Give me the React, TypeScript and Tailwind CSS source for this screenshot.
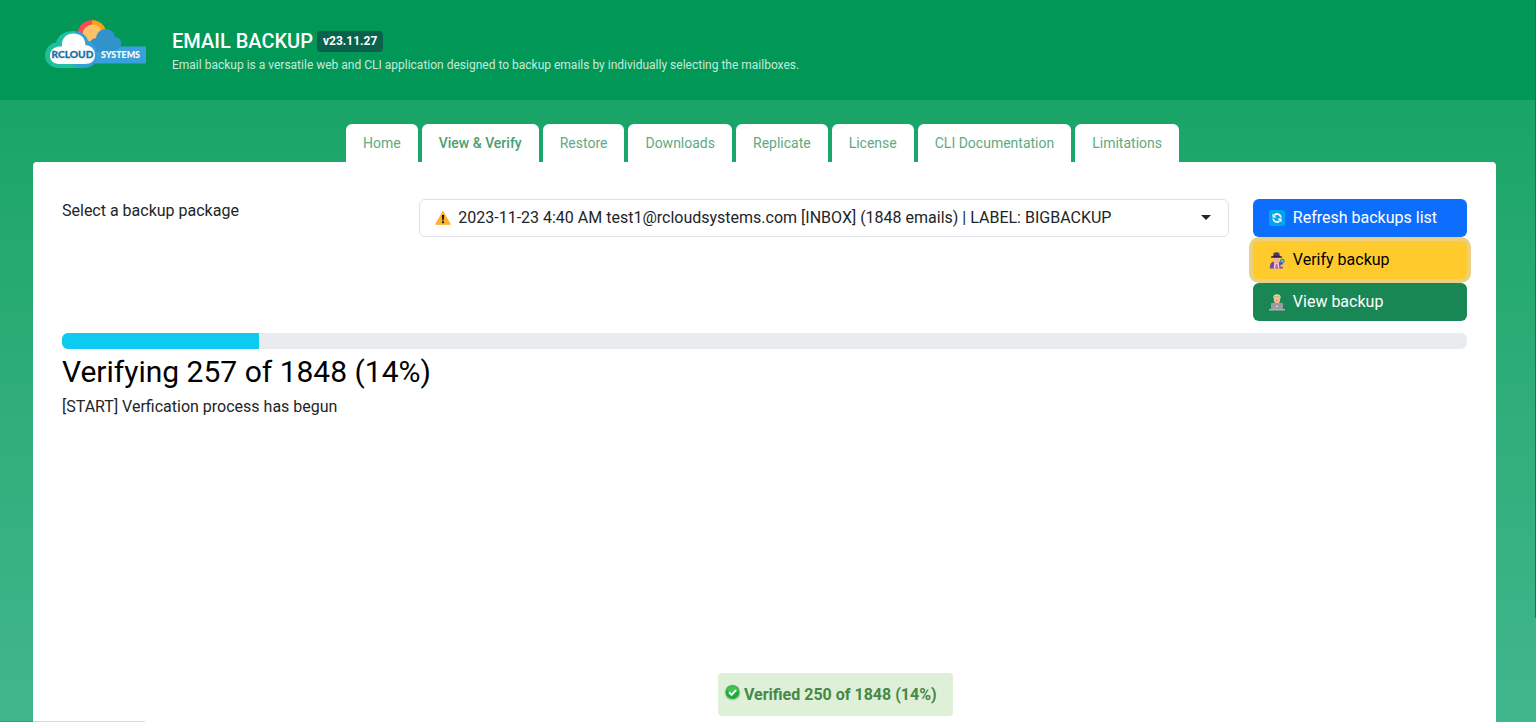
import { useState } from "react";

const tabs = [
  "Home",
  "View & Verify",
  "Restore",
  "Downloads",
  "Replicate",
  "License",
  "CLI Documentation",
  "Limitations",
];

const packages = [
  "2023-11-23 4:40 AM test1@rcloudsystems.com [INBOX] (1848 emails) | LABEL: BIGBACKUP",
];

const Logo = () => (
  <svg
    width="102"
    height="50"
    viewBox="0 0 102 50"
    role="img"
    aria-label="RCloud Systems"
  >
    <defs>
      <linearGradient id="cloudEdge" x1="0" x2="1" y1="0" y2="0">
        <stop offset="0" stopColor="#1fbf9c" />
        <stop offset="0.54" stopColor="#22bfa8" />
        <stop offset="0.62" stopColor="#30a3d4" />
        <stop offset="1" stopColor="#3a9bdb" />
      </linearGradient>
    </defs>
    <path d="M33 18a14.5 14.5 0 0 1 14-18v18z" fill="#f84b55" />
    <path d="M47 0a15 15 0 0 1 14.5 18H47z" fill="#f9a01b" />
    <circle cx="47.500" cy="14.500" r="10" fill="#fdc168" />
    <path d="M44 26.500h57v17H44z" fill="#3aa0dc" />
    <path
      d="M47 30c-4-2-4-11 4-12 1-6 5-9 10-9s8 3 9 8c7 0 8 9 3 12-4 3-22 4-26 1z"
      fill="#3292cb"
    />
    <path
      d="M15 48C5 48 0 42 0 36c0-7 5-13 11-13.500C13 15 20 11 28 11c7 0 13 3 15 9.500 6 2 9 8 9 14.500 0 8-5 13-13 13z"
      fill="url(#cloudEdge)"
    />
    <path
      d="M14 44C8 44 5 40 5 35.500c0-5 4-8.500 9-9h3C16 18 22 13.500 28.500 13.500S40 17 40.500 25C47 26 50 30 50 35c0 6-4 9-10 9z"
      fill="#fff"
    />
    <text
      x="6.500"
      y="38"
      fontFamily="Lato, sans-serif"
      fontSize="10.200"
      fontWeight="900"
      fill="#1673a5"
      stroke="#1673a5"
      strokeWidth=".3"
    >
      RCLOUD
    </text>
    <text
      x="56"
      y="38"
      fontFamily="Lato, sans-serif"
      fontSize="8.900"
      fontWeight="900"
      fill="#fff"
    >
      SYSTEMS
    </text>
  </svg>
);

const WarningIcon = () => (
  <svg width="16" height="16" viewBox="0 0 16 16" aria-hidden="true">
    <path
      d="M8 1.500 15.300 14.300H.7z"
      fill="#ffb02e"
      stroke="#ffb02e"
      strokeLinejoin="round"
    />
    <path d="M7 5h2l-.4 5.500H7.400z" fill="#000" />
    <circle cx="8" cy="12.300" r="1" fill="#000" />
  </svg>
);

const RefreshIcon = () => (
  <svg width="16" height="16" viewBox="0 0 16 16" aria-hidden="true">
    <rect width="16" height="16" rx="2" fill="#00a6ed" />
    <path
      d="M11.800 7.500A3.700 3.700 0 0 0 5.600 5M4.200 8.500A3.700 3.700 0 0 0 10.400 11"
      fill="none"
      stroke="#fff"
      strokeWidth="1.800"
    />
    <path d="M3.500 3.500v4h4zM12.500 12.500v-4h-4z" fill="#fff" />
  </svg>
);

const DetectiveIcon = () => (
  <svg width="16" height="17" viewBox="0 0 16 17" aria-hidden="true">
    <path
      d="M.8 16.500c0-4 1-6.500 3.700-7L7.500 13l3-3.500c2.500.5 3.500 3 3.500 7z"
      fill="#6b4fa0"
    />
    <path d="M4.500 5h6v3.500a3 3 0 0 1-6 0z" fill="#f0b391" />
    <path d="m5.300 10.500 2.200 1.500 2.200-1.500.8 6H4.700z" fill="#e3d3ee" />
    <path d="M6.800 12h1.600l.8 4.500H6.200z" fill="#f0508a" />
    <path d="M4 4.500 4.800.8Q7.500-.4 10.200.8L11 4.500z" fill="#433b6b" />
    <path d="M2 4.500q5.500-1.500 11 0v1.300H2z" fill="#321b41" />
    <path d="m13 10.500-.8 4" stroke="#321b41" strokeWidth="1.200" />
    <circle
      cx="13.300"
      cy="9"
      r="2"
      fill="#26c9fc"
      stroke="#46606e"
      strokeWidth=".7"
    />
    <circle cx="12.800" cy="13.800" r="1.500" fill="#f3ad8b" />
  </svg>
);

const TechnologistIcon = () => (
  <svg width="16" height="17" viewBox="0 0 16 17" aria-hidden="true">
    <path d="M2.500 12c0-2.500 2.500-4 5.500-4s5.500 1.500 5.500 4z" fill="#7e8a90" />
    <path d="M6.500 7h3v2.500L8 10.500 6.500 9.500z" fill="#e8a27c" />
    <path d="M4.800 3h6.400v2.500a3.200 3.500 0 0 1-6.400 0z" fill="#f2b898" />
    <path
      d="M4.300 4.500C3.800 1.800 5.500.3 8 .3s4.200 1.500 3.700 4.200L10.600 2.800H5.400z"
      fill="#e9d58c"
    />
    <path d="M6.800 6.300h2.400L8 7.100z" fill="#c4605c" />
    <rect x="2" y="9" width="12" height="6.500" rx=".8" fill="#9b9b9b" />
    <path d="M0 15h16v1.500H0z" fill="#b4acb8" />
    <circle cx="8" cy="12.300" r=".9" fill="#e6e6e6" />
  </svg>
);

const CheckIcon = () => (
  <svg
    className="mb-1 shrink-0"
    width="17"
    height="17"
    viewBox="0 0 18 18"
    aria-hidden="true"
  >
    <circle cx="9" cy="9" r="8.500" fill="#b4cdb0" />
    <circle cx="9" cy="8.500" r="7.300" fill="#1bac33" />
    <path d="M3 7.500a6 5.500 0 0 1 12 0q-6 3-12 0z" fill="#3fc652" />
    <path
      d="m5.300 8.800 2.700 2.700 4.800-5"
      fill="none"
      stroke="#fff"
      strokeWidth="2.200"
    />
  </svg>
);

const Header = () => (
  <header className="flex h-[100px] shrink-0 items-start gap-[25px] bg-[#009757] pl-[45px] pt-5">
    <Logo />
    <div className="pt-2">
      <div className="flex items-center gap-1">
        <h1 className="text-[20px] leading-[26px] font-medium text-white">
          EMAIL BACKUP
        </h1>
        <span className="rounded bg-[#08614a] px-[6px] text-[12px] leading-[21px] font-bold text-white">
          v23.11.27
        </span>
      </div>
      <p className="text-[12px] leading-[22px] text-[#c9eadb]">
        Email backup is a versatile web and CLI application designed to backup
        emails by individually selecting the mailboxes.
      </p>
    </div>
  </header>
);

export default function App() {
  const [activeTab, setActiveTab] = useState("View & Verify");
  const [selected, setSelected] = useState(packages[0]);
  const verified = 257;
  const total = 1848;
  const percent = Math.round((verified / total) * 100);

  return (
    <div className="relative flex min-h-screen flex-col bg-linear-to-b from-[#0da260] to-[#40b68d] font-['Roboto',sans-serif] text-[16px] leading-6 text-[#212529]">
      <Header />

      <nav className="mt-6 flex items-end justify-center gap-1 pr-[11px]">
        {tabs.map((tab) => (
          <button
            key={tab}
            type="button"
            onClick={() => setActiveTab(tab)}
            className={
              tab === activeTab
                ? "h-[38px] rounded-t-md bg-white px-[17px] text-[14px] font-medium text-[#4a9e72]"
                : "h-[38px] rounded-t-md bg-white px-[17px] text-[14px] text-[#5fa984]"
            }
          >
            {tab}
          </button>
        ))}
      </nav>

      <main className="mr-10 ml-[33px] flex-1 rounded-t-sm bg-white px-[29px] pt-[37px]">
        <div className="grid grid-cols-12 gap-6">
          <label htmlFor="package" className="col-span-3">
            Select a backup package
          </label>
          <div className="relative col-span-7">
            <select
              id="package"
              value={selected}
              onChange={(e) => setSelected(e.target.value)}
              className="h-[38px] w-full appearance-none rounded-md border border-[#dee2e6] bg-white pr-9 pl-[38px]"
            >
              {packages.map((p) => (
                <option key={p}>{p}</option>
              ))}
            </select>
            <span className="pointer-events-none absolute top-[11px] left-4">
              <WarningIcon />
            </span>
            <span className="pointer-events-none absolute top-4 right-[18px] border-x-5 border-t-5 border-x-transparent border-t-[#212529]" />
          </div>
          <div className="col-span-2 flex flex-col gap-1">
            <button
              type="button"
              className="flex h-[38px] items-center gap-2 rounded-md bg-[#0d6efd] px-4 text-white"
            >
              <RefreshIcon />
              Refresh backups list
            </button>
            <button
              type="button"
              className="flex h-[38px] items-center gap-2 rounded-md bg-[#ffca2c] px-4 text-black ring-4 ring-[#ecd080]"
            >
              <DetectiveIcon />
              Verify backup
            </button>
            <button
              type="button"
              className="relative flex h-[38px] items-center gap-2 rounded-md bg-[#198754] px-4 text-white"
            >
              <TechnologistIcon />
              View backup
            </button>
          </div>
        </div>

        <div
          role="progressbar"
          aria-label="Verification progress"
          aria-valuenow={percent}
          aria-valuemin={0}
          aria-valuemax={100}
          className="mt-3 h-4 overflow-hidden rounded-md bg-[#e9ecef]"
        >
          <div
            className="h-full bg-[#0dcaf0]"
            style={{ width: `${percent}%` }}
          />
        </div>
        <h2 className="mt-1 text-[30px] leading-[38px] text-black">
          Verifying {verified} of {total} ({percent}%)
        </h2>
        <p className="mt-1">[START] Verfication process has begun</p>
      </main>

      {/* Toast */}
      <div
        role="status"
        className="fixed bottom-[6px] left-[718px] flex h-[43px] items-center gap-[3px] rounded bg-[#dff0d8] pr-4 pl-[6px] font-bold text-[#468847]"
      >
        <CheckIcon />
        Verified 250 of 1848 (14%)
      </div>

      {/* Scroll thumb and browser status strip */}
      <div className="fixed top-0 right-0 h-[618px] w-px bg-[#078050]" />
      <div className="fixed bottom-0 left-0 h-px w-[145px] bg-black/15" />
    </div>
  );
}
